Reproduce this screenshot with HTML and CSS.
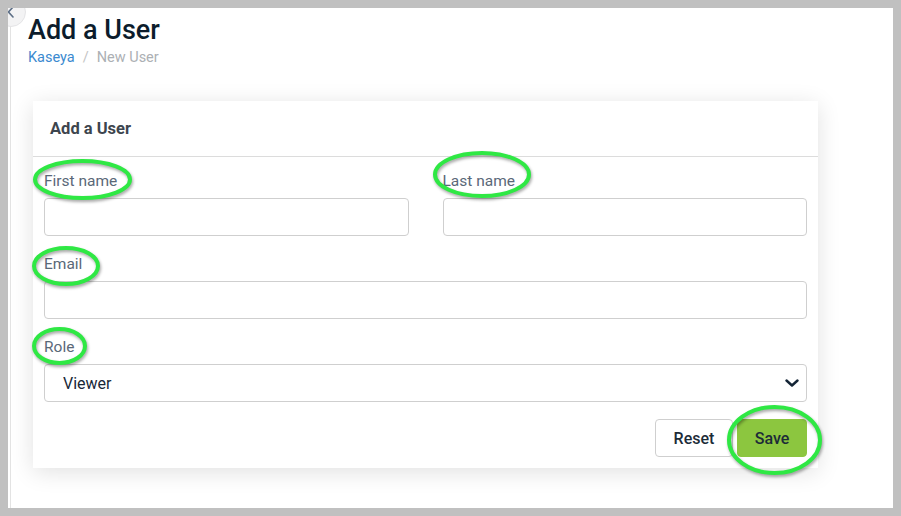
FILE: index.html
```html
<!DOCTYPE html>
<html lang="en">
<head>
<meta charset="utf-8">
<title>Add a User</title>
<link rel="stylesheet" href="styles.css">
</head>
<body>
<div class="frame">
  <div class="collapse">
    <svg class="collapse-icon" width="8" height="12" viewBox="0 0 8 12"><path d="M6 1 L1.5 6 L6 11" fill="none" stroke="#5d6f86" stroke-width="1.6" stroke-linecap="round" stroke-linejoin="round"/></svg>
  </div>
  <main class="main">
    <h1 class="title">Add a User</h1>
    <nav class="crumbs"><a class="crumb-link">Kaseya</a><span class="crumb-sep">/</span><span class="crumb-cur">New User</span></nav>
    <section class="card">
      <header class="card-head">Add a User</header>
      <form class="card-body">
        <div class="row two">
          <div class="field">
            <label class="label">First name</label>
            <input class="input" type="text">
          </div>
          <div class="field">
            <label class="label">Last name</label>
            <input class="input" type="text">
          </div>
        </div>
        <div class="field">
          <label class="label">Email</label>
          <input class="input" type="text">
        </div>
        <div class="field">
          <label class="label">Role</label>
          <div class="select-wrap">
            <select class="input select"><option>Viewer</option></select>
            <svg class="select-caret" width="14" height="8" viewBox="0 0 14 8"><path d="M1.5 1.5 L7 6.5 L12.5 1.5" fill="none" stroke="#142536" stroke-width="2.4" stroke-linecap="round" stroke-linejoin="round"/></svg>
          </div>
        </div>
        <div class="actions">
          <button type="button" class="btn btn-reset">Reset</button>
          <button type="button" class="btn btn-save">Save</button>
        </div>
      </form>
    </section>
  </main>
</div>
<svg class="marks" width="901" height="516" viewBox="0 0 901 516">
  <g fill="none" stroke="#2fe844" stroke-width="4">
    <ellipse cx="82.5" cy="179.5" rx="47.5" ry="18.5"/>
    <ellipse cx="482" cy="174.5" rx="47" ry="21.5"/>
    <ellipse cx="66" cy="266" rx="32" ry="18"/>
    <ellipse cx="59.5" cy="346" rx="25.5" ry="17"/>
    <ellipse cx="774.5" cy="440" rx="45.5" ry="33"/>
  </g>
</svg>
</body>
</html>
```
FILE: styles.css
```css
* { box-sizing: border-box; }
html, body { margin: 0; }
body {
  background: #c0c0c0;
  padding: 8px;
  font-family: Roboto, "Liberation Sans", Arial, sans-serif;
  position: relative;
  width: 901px;
  height: 516px;
  overflow: hidden;
}
.frame {
  position: relative;
  width: 885px;
  height: 500px;
  background: #fff;
  overflow: hidden;
  padding-left: 2px;
  display: flex;
}
.collapse {
  position: absolute;
  left: -12px;
  top: -11px;
  width: 30px;
  height: 30px;
  border-radius: 50%;
  background: #f3f3f4;
  border: 1px solid #e4e4e6;
  display: flex;
  align-items: center;
  justify-content: center;
  z-index: 2;
}
.collapse-icon { display: block; }
.main {
  flex: 1;
  border-left: 1px solid #e3e3e3;
  padding: 6px 0 0 17px;
}
.title {
  margin: 0;
  font-size: 27px;
  line-height: 32px;
  font-weight: 500;
  color: #0c1c2c;
}
.crumbs {
  margin-top: 2px;
  font-size: 14.5px;
  line-height: 20px;
  display: flex;
  align-items: baseline;
}
.crumb-link { color: #3b8ad0; }
.crumb-sep { color: #c4c4c4; margin: 0 8px; }
.crumb-cur { color: #acb0b4; }
.card {
  margin-top: 33px;
  margin-left: 5px;
  width: 785px;
  background: #fff;
  box-shadow: 0 4px 22px rgba(0, 0, 0, 0.12);
}
.card-head {
  height: 56px;
  border-bottom: 1px solid #dcdcdc;
  padding: 0 17px;
  display: flex;
  align-items: center;
  font-weight: 700;
  font-size: 16.5px;
  color: #3d454e;
}
.card-body {
  padding: 13px 11px 11px;
  display: flex;
  flex-direction: column;
  gap: 17px;
}
.row.two {
  display: grid;
  grid-template-columns: 1fr 1fr;
  column-gap: 34px;
}
.field { display: flex; flex-direction: column; }
.label {
  font-size: 15.5px;
  line-height: 22px;
  color: #5a6878;
  margin-bottom: 6px;
}
.input {
  height: 38px;
  border: 1px solid #cfcfcf;
  border-radius: 4px;
  background: #fff;
  font-family: inherit;
  font-size: 16px;
  color: #182838;
  padding: 0 12px;
  width: 100%;
  margin: 0;
}
.select-wrap { position: relative; }
.select {
  appearance: none;
  -webkit-appearance: none;
  padding-left: 18px;
  display: block;
}
.select-caret {
  position: absolute;
  right: 8px;
  top: 15px;
  pointer-events: none;
}
.actions {
  display: flex;
  justify-content: flex-end;
  gap: 4px;
}
.btn {
  height: 38px;
  border-radius: 4px;
  font-family: inherit;
  font-size: 16px;
  font-weight: 500;
  color: #1c2b38;
  cursor: pointer;
}
.btn-reset {
  width: 78px;
  background: #fff;
  border: 1px solid #cfcfcf;
}
.btn-save {
  width: 70px;
  background: #8cc63f;
  border: 1px solid #8cc63f;
}
.marks {
  position: absolute;
  left: 0;
  top: 0;
  pointer-events: none;
  filter: drop-shadow(1px 2px 1.5px rgba(0, 0, 0, 0.35));
}
```
